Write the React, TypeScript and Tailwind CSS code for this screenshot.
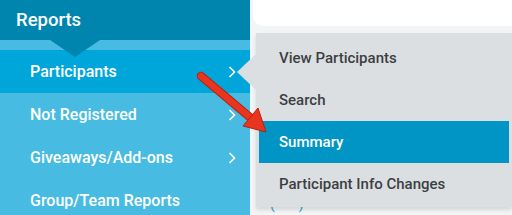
import React from "react";

const leftItems = [
    { label: "Participants", active: true, chevron: true },
    { label: "Not Registered", active: false, chevron: true },
    { label: "Giveaways/Add-ons", active: false, chevron: true },
    { label: "Group/Team Reports", active: false, chevron: false },
];

const popupItems = ["View Participants", "Search", "Summary", "Participant Info Changes"];

function Chevron() {
    return (
        <svg width="8" height="12" viewBox="0 0 8 12" className="mr-[14px]">
            <polyline points="1.5,1 6.5,6 1.5,11" fill="none" stroke="white" strokeWidth="1.6" />
        </svg>
    );
}

export default function App() {
    return (
        <div
            className="relative flex w-[512px] h-[215px] overflow-hidden bg-white"
            style={{ fontFamily: "Roboto, 'Open Sans', sans-serif" }}
        >
            {/* left sidebar */}
            <div className="flex flex-col w-[250px] shrink-0 bg-[#47bbe1]">
                <div className="relative shrink-0 h-[40px] bg-[#0086ae] flex items-center pl-4 pt-[2px]">
                    <span className="text-white text-[18.5px] font-medium">Reports</span>
                    <div className="absolute left-[50px] top-[40px] z-10 w-0 h-0 border-l-[25px] border-r-[25px] border-t-[17px] border-l-transparent border-r-transparent border-t-[#0086ae]" />
                </div>
                <div className="shrink-0 h-[10px] bg-[#47bbe1]" />
                {leftItems.map((item) => (
                    <div
                        key={item.label}
                        className={`shrink-0 flex items-center justify-between h-[43px] pl-[30px] ${item.active ? "bg-[#00a6da]" : ""}`}
                    >
                        <span className="text-white text-[16px] font-medium">{item.label}</span>
                        {item.chevron && <Chevron />}
                    </div>
                ))}
            </div>

            {/* right area */}
            <div className="flex-1 flex flex-col bg-[#f2f4f5]">
                <div className="shrink-0 h-[26px] ml-[3px] bg-white rounded-bl-[10px]" />
                <div className="relative shrink-0 mt-[7px] ml-[6px] h-[174px] bg-[#dcdfe2] shadow-[0_3px_4px_rgba(0,0,0,0.12)] pt-[4px] z-10">
                    <div className="absolute left-[-19px] top-[21px] w-0 h-0 border-t-[18px] border-b-[18px] border-r-[19px] border-t-transparent border-b-transparent border-r-[#dcdfe2]" />
                    {popupItems.map((label) => (
                        <div
                            key={label}
                            className={`flex items-center h-[42px] ${label === "Summary" ? "bg-[#0095c4] text-white mx-[3px] pl-[20px]" : "text-[#3c3f42] pl-[23px]"}`}
                        >
                            <span className="text-[15px] font-medium">{label}</span>
                        </div>
                    ))}
                </div>
                <div className="shrink-0 flex gap-[24px] ml-[20px] -mt-[11px] text-[#2aa3d6] text-[14px] leading-[16px]">
                    <span>(</span>
                    <span>)</span>
                </div>
            </div>

            {/* red annotation arrow */}
            <svg className="absolute left-0 top-0 z-20 pointer-events-none" width="512" height="215" viewBox="0 0 512 215">
                <line x1="201" y1="76" x2="252" y2="119" stroke="#b8200f" strokeWidth="8.5" strokeLinecap="round" />
                <line x1="201" y1="76" x2="252" y2="119" stroke="#e8351f" strokeWidth="6.5" strokeLinecap="round" />
                <polygon points="266,132 258,108 243,126" fill="#e8351f" stroke="#b8200f" strokeWidth="1" strokeLinejoin="round" />
            </svg>
        </div>
    );
}
